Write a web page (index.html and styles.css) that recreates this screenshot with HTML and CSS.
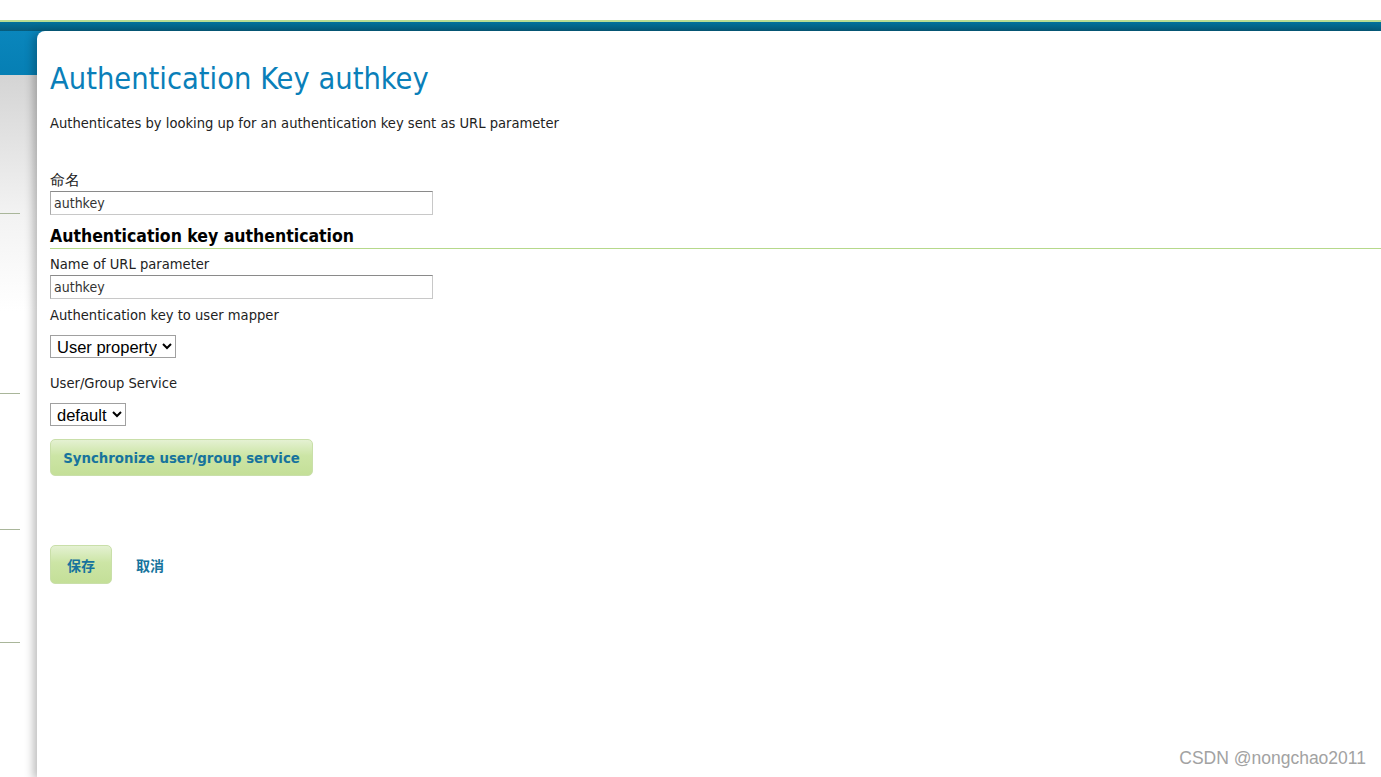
FILE: index.html
```html
<!DOCTYPE html>
<html lang="zh">
<head>
<meta charset="utf-8">
<title>Authentication Key authkey</title>
<link rel="stylesheet" href="styles.css">
</head>
<body>
<div class="top-white"></div>
<div class="top-green"></div>
<div class="top-blue"></div>
<div class="layout">
  <aside class="sidebar">
    <div class="sep sep1"></div>
    <div class="sep sep2"></div>
    <div class="sep sep3"></div>
    <div class="sep sep4"></div>
  </aside>
  <main class="panel">
    <h1 class="title">Authentication Key authkey</h1>
    <p class="desc">Authenticates by looking up for an authentication key sent as URL parameter</p>
    <form class="form">
      <label class="label label-name">命名</label>
      <input class="text" type="text" value="authkey">
      <h2 class="section">Authentication key authentication</h2>
      <label class="label label-param">Name of URL parameter</label>
      <input class="text" type="text" value="authkey">
      <label class="label label-mapper">Authentication key to user mapper</label>
      <div class="select-row"><select class="select"><option>User property</option></select></div>
      <label class="label label-service">User/Group Service</label>
      <div class="select-row"><select class="select"><option>default</option></select></div>
      <div class="btn-row"><button type="button" class="btn btn-sync">Synchronize user/group service</button></div>
      <div class="actions">
        <button type="button" class="btn btn-save">保存</button>
        <a class="cancel" href="#">取消</a>
      </div>
    </form>
  </main>
</div>
<div class="watermark">CSDN @nongchao2011</div>
</body>
</html>
```
FILE: styles.css
```css
html, body {
  margin: 0;
  padding: 0;
  background: #fff;
  height: 777px;
  overflow: hidden;
}
body {
  font-family: "DejaVu Sans Condensed", "DejaVu Sans", sans-serif;
  color: #222;
  position: relative;
}
.top-white { height: 20px; background: #fff; }
.top-green { height: 2px; background: #b9dc93; }
.top-blue { height: 9px; background: linear-gradient(#02719c, #075b7b); }
.layout {
  display: flex;
  height: 746px;
  background:
    linear-gradient(#0a86bc, #067fb4 44px, transparent 44px),
    linear-gradient(#d4d4d4 44px, #f2f2f2 180px, #ffffff 280px);
}
.sidebar {
  width: 37px;
  flex: none;
  display: flex;
  flex-direction: column;
}
.sep {
  width: 20px;
  height: 1px;
  background: #a9b69a;
}
.sep1 { margin-top: 182px; }
.sep2 { margin-top: 179px; }
.sep3 { margin-top: 135px; }
.sep4 { margin-top: 112px; }
.panel {
  flex: 1;
  background: #fff;
  border-top-left-radius: 8px;
  box-shadow: -4px 2px 8px rgba(0,0,0,0.25);
  padding-left: 13px;
}
.title {
  margin: 28px 0 0;
  font-weight: normal;
  font-size: 30.5px;
  line-height: 40px;
  color: #0a7fb9;
}
.desc {
  margin: 15px 0 0;
  font-size: 14.6px;
  line-height: 18px;
  color: #222;
}
.form {
  display: flex;
  flex-direction: column;
  align-items: flex-start;
}
.label {
  font-size: 14.6px;
  line-height: 18px;
  color: #222;
}
.label-name { margin-top: 39px; }
.text {
  margin: 2px 0 0;
  width: 383px;
  height: 24px;
  box-sizing: border-box;
  border: 1px solid #c8c8c8;
  border-top-color: #8a8a8a;
  border-left-color: #a9a9a9;
  padding: 0 3px;
  font-family: "DejaVu Sans Condensed", "DejaVu Sans", sans-serif;
  font-size: 14px;
  color: #333;
  background: #fff;
}
.section {
  align-self: stretch;
  margin: 10px 0 0;
  font-size: 17.5px;
  line-height: 22px;
  font-weight: bold;
  color: #000;
  border-bottom: 1px solid #b6d98b;
  padding-bottom: 1px;
}
.label-param { margin-top: 6px; }
.label-mapper { margin-top: 7px; }
.label-service { margin-top: 16px; }
.select-row { margin-top: 11px; }
.select {
  font-family: "Liberation Sans", Arial, sans-serif;
  font-size: 16.5px;
  height: 23px;
  border: 1px solid #a0a0a0;
  background: #fff;
  color: #000;
  padding: 0 2px 0 2px;
}
.btn {
  font-family: "DejaVu Sans Condensed", "DejaVu Sans", sans-serif;
  font-weight: bold;
  color: #17739d;
  background: linear-gradient(#e4f1d2, #cce5a5 45%, #c4df98);
  border: 1px solid #c9dfa9;
  border-radius: 5px;
  cursor: pointer;
}
.btn-row { margin-top: 13px; }
.btn-sync {
  width: 263px;
  height: 37px;
  font-size: 14.8px;
  padding: 0;
}
.actions {
  margin-top: 69px;
  display: flex;
  align-items: center;
  gap: 24px;
}
.btn-save {
  width: 62px;
  height: 39px;
  font-size: 14px;
  padding: 0;
  font-family: "Noto Sans CJK SC", sans-serif;
}
.cancel {
  font-family: "Noto Sans CJK SC", sans-serif;
  font-weight: bold;
  font-size: 14px;
  color: #17739d;
  text-decoration: none;
}
.watermark {
  position: absolute;
  right: 15px;
  bottom: 8px;
  font-family: "Liberation Sans", Arial, sans-serif;
  font-size: 17.5px;
  color: #a2a2a2;
}
```
